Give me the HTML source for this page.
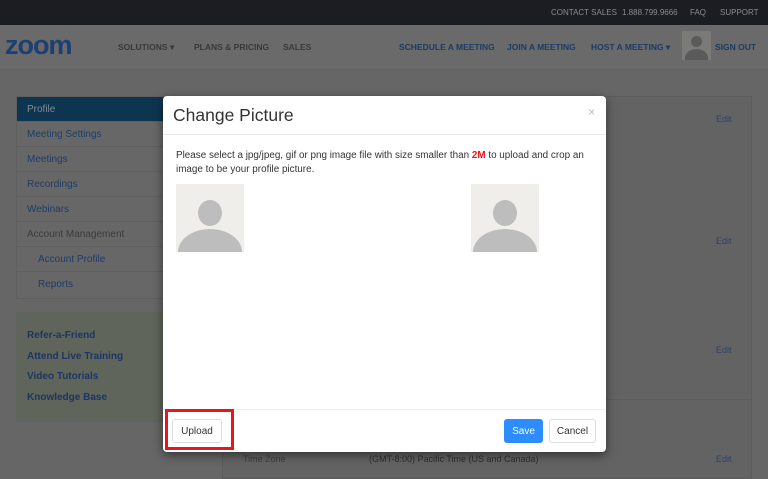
<!DOCTYPE html>
<html><head><meta charset="utf-8"><style>
*{margin:0;padding:0;box-sizing:border-box}
body{width:768px;height:479px;overflow:hidden;background:#666;font-family:"Liberation Sans",sans-serif;position:relative}
.abs{position:absolute}
.top{left:0;top:0;width:768px;height:25px;background:#1c1d22;color:#8a8b8f;font-size:8px}
.top span{position:absolute;top:8px}
.nav{left:0;top:25px;width:768px;height:45px;background:#6a6a6a;border-bottom:1px solid #626262}
.nav .l{position:absolute;top:17px;font-size:8.5px;font-weight:bold;color:#3a3a3a}
.nav .b{position:absolute;top:17px;font-size:8.5px;font-weight:bold;color:#1c3b66}
.side{left:16px;top:96px;width:150px;height:203px;background:#676767;border:1px solid #5f5f5f}
.side div{height:25px;line-height:25px;font-size:10px;color:#1e3c6a;padding-left:10px;border-bottom:1px solid #5f5f5f}
.green{left:16px;top:312px;width:150px;height:110px;background:#5f655a}
.green div{font-size:10px;font-weight:bold;color:#1c3566;padding-left:11px;height:20.5px}
.panel{left:222px;top:96px;width:530px;height:383px;background:#636363;border:1px solid #5c5c5c}
.edit{position:absolute;left:716px;font-size:9px;color:#2a4569}
.modal{left:163px;top:96px;width:443px;height:356px;background:#fff;border-radius:4px;box-shadow:0 3px 10px rgba(0,0,0,.5)}
.av{position:absolute;width:68px;height:68px;background:#efeeea;overflow:hidden}
.btn{position:absolute;border:1px solid #ddd;border-radius:3px;font-size:10px;color:#333;text-align:center;background:#fff;display:flex;align-items:center;justify-content:center}
</style></head><body>
<div class="abs top"><span style="left:551px">CONTACT SALES</span><span style="left:622px">1.888.799.9666</span><span style="left:690px">FAQ</span><span style="left:720px">SUPPORT</span></div>
<div class="abs nav">
<div style="position:absolute;left:5px;top:5px;font-size:27px;font-weight:bold;color:#1d3f73;letter-spacing:-1px">zoom</div>
<span class="l" style="left:118px">SOLUTIONS ▾</span><span class="l" style="left:194px">PLANS &amp; PRICING</span><span class="l" style="left:283px">SALES</span>
<span class="b" style="left:399px">SCHEDULE A MEETING</span><span class="b" style="left:507px">JOIN A MEETING</span><span class="b" style="left:591px">HOST A MEETING ▾</span>
<div style="position:absolute;left:682px;top:6px;width:29px;height:29px;background:#7a7a78;overflow:hidden"><div style="position:absolute;left:9px;top:5px;width:11px;height:11px;border-radius:50%;background:#5a5a5a"></div><div style="position:absolute;left:3px;top:18px;width:23px;height:18px;border-radius:50%;background:#5a5a5a"></div></div>
<span class="b" style="left:715px">SIGN OUT</span>
</div>
<div class="abs side">
<div style="background:#0e3550;color:#7f8a98">Profile</div>
<div>Meeting Settings</div><div>Meetings</div><div>Recordings</div><div>Webinars</div>
<div style="color:#3c3c3c">Account Management</div><div style="padding-left:21px">Account Profile</div><div style="padding-left:21px;border:none">Reports</div>
</div>
<div class="abs green" style="padding-top:18px"><div>Refer-a-Friend</div><div>Attend Live Training</div><div>Video Tutorials</div><div>Knowledge Base</div></div>
<div class="abs panel">
<div style="position:absolute;left:0;top:302px;width:528px;border-top:1px solid #5c5c5c"></div>
<div style="position:absolute;left:20px;top:357px;font-size:9px;color:#3e3e3e">Time Zone</div>
<div style="position:absolute;left:146px;top:357px;font-size:9px;color:#2e2e2e">(GMT-8:00) Pacific Time (US and Canada)</div>
</div>
<span class="edit" style="top:114px">Edit</span><span class="edit" style="top:236px">Edit</span><span class="edit" style="top:345px">Edit</span><span class="edit" style="top:454px">Edit</span>
<div class="abs modal">
<div style="position:absolute;left:10px;top:9px;font-size:17.5px;color:#333">Change Picture</div>
<div style="position:absolute;left:425px;top:9px;font-size:12px;color:#bbb">×</div>
<div style="position:absolute;left:0;top:38px;width:443px;border-top:1px solid #e8e8e8"></div>
<div style="position:absolute;left:13px;top:53px;width:425px;font-size:9.9px;line-height:14px;color:#333">Please select a jpg/jpeg, gif or png image file with size smaller than <b style="color:#e8141e">2M</b> to upload and crop an image to be your profile picture.</div>
<div class="av" style="left:13px;top:88px"><div style="position:absolute;left:22px;top:16px;width:24px;height:26px;border-radius:50%;background:#bdbdbd"></div><div style="position:absolute;left:2px;top:45px;width:64px;height:46px;border-radius:50%;background:#bdbdbd"></div></div>
<div class="av" style="left:308px;top:88px"><div style="position:absolute;left:22px;top:16px;width:24px;height:26px;border-radius:50%;background:#bdbdbd"></div><div style="position:absolute;left:2px;top:45px;width:64px;height:46px;border-radius:50%;background:#bdbdbd"></div></div>
<div style="position:absolute;left:0;top:313px;width:443px;border-top:1px solid #eee"></div>
<div class="btn" style="left:9px;top:323px;width:50px;height:24px">Upload</div>
<div style="position:absolute;left:2px;top:313px;width:69px;height:41px;border:3px solid #e8141e"></div>
<div class="btn" style="left:341px;top:323px;width:39px;height:24px;background:#2d8cff;border-color:#2d8cff;color:#fff">Save</div>
<div class="btn" style="left:386px;top:323px;width:47px;height:24px">Cancel</div>
</div>
</body></html>
